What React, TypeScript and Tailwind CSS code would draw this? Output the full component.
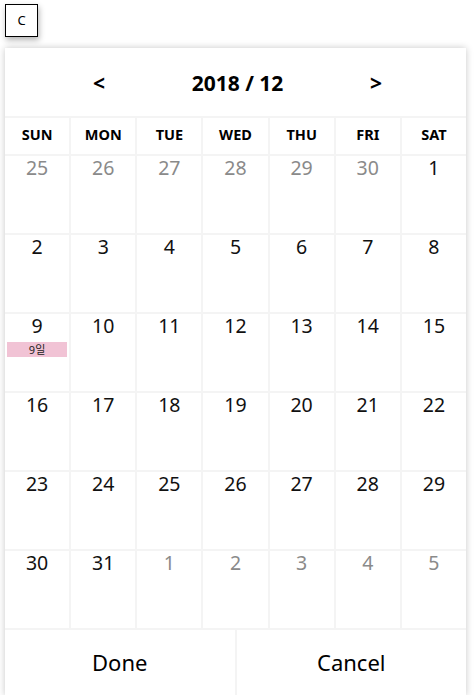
import React from "react";

const weekdays = ["SUN", "MON", "TUE", "WED", "THU", "FRI", "SAT"];

type Day = { n: number; cur: boolean; badge?: string };

function buildDays(): Day[] {
  const days: Day[] = [];
  for (let d = 25; d <= 30; d++) days.push({ n: d, cur: false });
  for (let d = 1; d <= 31; d++) days.push({ n: d, cur: true, badge: d === 9 ? "9일" : undefined });
  for (let d = 1; d <= 5; d++) days.push({ n: d, cur: false });
  return days;
}

export default function App() {
  const days = buildDays();
  return (
    <div
      className="w-[474px] h-[695px] overflow-hidden bg-white pt-[4px] pl-[5px]"
      style={{ fontFamily: '"Noto Sans", "Noto Sans CJK KR", sans-serif' }}
    >
      <button className="w-[33px] h-[33px] border border-black bg-white text-[13px] text-black flex items-center justify-center shadow-[1px_3px_6px_rgba(0,0,0,0.3)]">
        C
      </button>
      <div className="mt-[11px] w-[461px] bg-white shadow-[0_0_7px_rgba(0,0,0,0.22)]">
        <div className="h-[68px] flex items-center justify-between pl-[88px] pr-[84px] pt-[2px]">
          <span className="text-[21px] font-bold text-black leading-none">&lt;</span>
          <span className="text-[21px] font-bold text-black leading-none">2018 / 12</span>
          <span className="text-[21px] font-bold text-black leading-none">&gt;</span>
        </div>
        <div className="grid grid-cols-7 gap-[2px] bg-[#f4f4f4] border-t-2 border-b-2 border-[#f4f4f4]">
          {weekdays.map((w) => (
            <div key={w} className="bg-white h-[36px] flex items-center justify-center pb-[3px] text-[14.5px] font-bold text-black">
              {w}
            </div>
          ))}
          {days.map((d, i) => (
            <div key={i} className="bg-white h-[77px] flex flex-col items-center pt-[1px]">
              <span className={`text-[19.5px] leading-[22px] ${d.cur ? "text-[#111]" : "text-[#8a8a8a]"}`}>{d.n}</span>
              {d.badge && (
                <div className="mt-[5px] w-[60px] h-[15px] bg-[#f1c3d5] flex items-center justify-center text-[11px] leading-none text-[#222]">
                  {d.badge}
                </div>
              )}
            </div>
          ))}
        </div>
        <div className="flex h-[66px]">
          <div className="flex-1 flex items-center justify-center text-[22px] text-black border-r-2 border-[#f4f4f4] pb-[2px]">
            Done
          </div>
          <div className="flex-1 flex items-center justify-center text-[22px] text-black pb-[2px]">Cancel</div>
        </div>
      </div>
    </div>
  );
}
